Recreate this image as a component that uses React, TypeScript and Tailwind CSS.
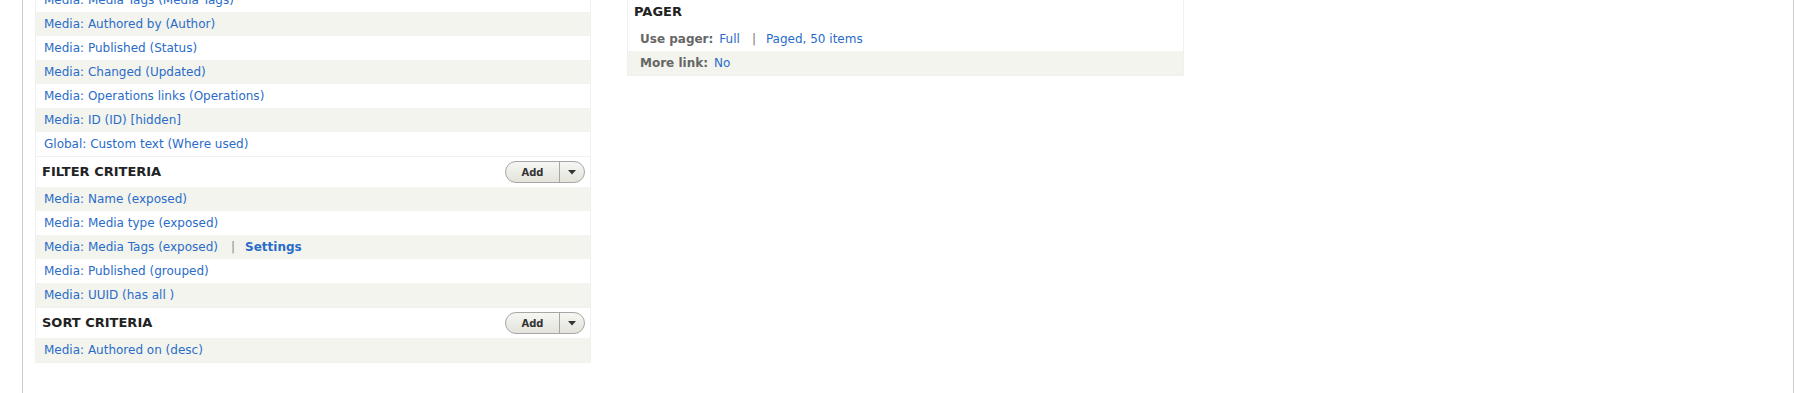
import React from "react";

type Setting = { label: string; settings?: boolean };

const fieldRows: Setting[] = [
  { label: "Media: Media Tags (Media Tags)" },
  { label: "Media: Authored by (Author)" },
  { label: "Media: Published (Status)" },
  { label: "Media: Changed (Updated)" },
  { label: "Media: Operations links (Operations)" },
  { label: "Media: ID (ID) [hidden]" },
  { label: "Global: Custom text (Where used)" },
];

const filterRows: Setting[] = [
  { label: "Media: Name (exposed)" },
  { label: "Media: Media type (exposed)" },
  { label: "Media: Media Tags (exposed)", settings: true },
  { label: "Media: Published (grouped)" },
  { label: "Media: UUID (has all )" },
];

const sortRows: Setting[] = [{ label: "Media: Authored on (desc)" }];

function AddButton() {
  return (
    <div className="flex h-[22px] w-[80px] items-stretch rounded-full border border-[#a6a6a6] bg-linear-to-b from-[#f6f6f3] to-[#e4e4dc] text-[10px] font-bold text-[#333]">
      <span className="flex w-[53px] items-center justify-center">Add</span>
      <span className="flex flex-1 items-center justify-center border-l border-[#a6a6a6]">
        <svg width="8" height="5" viewBox="0 0 8 5">
          <path d="M0 0h8L4 4.5z" fill="#333" />
        </svg>
      </span>
    </div>
  );
}

function Rows({ rows, startGray }: { rows: Setting[]; startGray: boolean }) {
  return (
    <>
      {rows.map((row, i) => {
        const gray = startGray ? i % 2 === 0 : i % 2 === 1;
        return (
          <div
            key={row.label}
            className={`flex h-[24px] items-center pl-[8px] ${gray ? "bg-[#f3f4ee]" : "bg-white"}`}
          >
            <a className="text-[#2a6cc8]">{row.label}</a>
            {row.settings && (
              <>
                <span className="ml-[13px] mr-[10px] text-[#8a8a8a]">|</span>
                <a className="font-bold text-[#2a6cc8]">Settings</a>
              </>
            )}
          </div>
        );
      })}
    </>
  );
}

function Bucket({ title, rows, withAdd }: { title: string; rows: Setting[]; withAdd?: boolean }) {
  return (
    <div className="border border-t-0 border-[#f0f0ee]">
      <div className="flex h-[30px] items-center justify-between pl-[6px] pr-[5px]">
        <h3 className="text-[13px] font-bold uppercase text-[#222]">{title}</h3>
        {withAdd && <AddButton />}
      </div>
      <Rows rows={rows} startGray={true} />
    </div>
  );
}

export default function App() {
  return (
    <div
      className="h-[393px] overflow-hidden bg-white text-[12px]"
      style={{ fontFamily: '"DejaVu Sans", Verdana, sans-serif' }}
    >
      <div className="ml-[22px] flex h-full items-start gap-[36px] border-x border-[#cccccc] pl-[12px]">
        {/* left column, scrolled so the fields list is cut at the top */}
        <div className="-mt-[12px] w-[556px]">
          <div className="border-x border-b border-[#f0f0ee]">
            <Rows rows={fieldRows} startGray={false} />
          </div>
          <Bucket title="Filter criteria" rows={filterRows} withAdd />
          <Bucket title="Sort criteria" rows={sortRows} withAdd />
        </div>

        <div className="-mt-[4px] w-[557px] border border-[#f0f0ee]">
          <div className="flex h-[30px] items-center pl-[6px]">
            <h3 className="text-[13px] font-bold uppercase text-[#222]">Pager</h3>
          </div>
          <div className="flex h-[24px] items-center bg-white pl-[12px]">
            <span className="mr-[6px] font-bold text-[#666]">Use pager:</span>
            <a className="text-[#2a6cc8]">Full</a>
            <span className="ml-[12px] mr-[10px] text-[#777]">|</span>
            <a className="text-[#2a6cc8]">Paged, 50 items</a>
          </div>
          <div className="flex h-[24px] items-center bg-[#f3f4ee] pl-[12px]">
            <span className="mr-[6px] font-bold text-[#666]">More link:</span>
            <a className="text-[#2a6cc8]">No</a>
          </div>
        </div>
      </div>
    </div>
  );
}
